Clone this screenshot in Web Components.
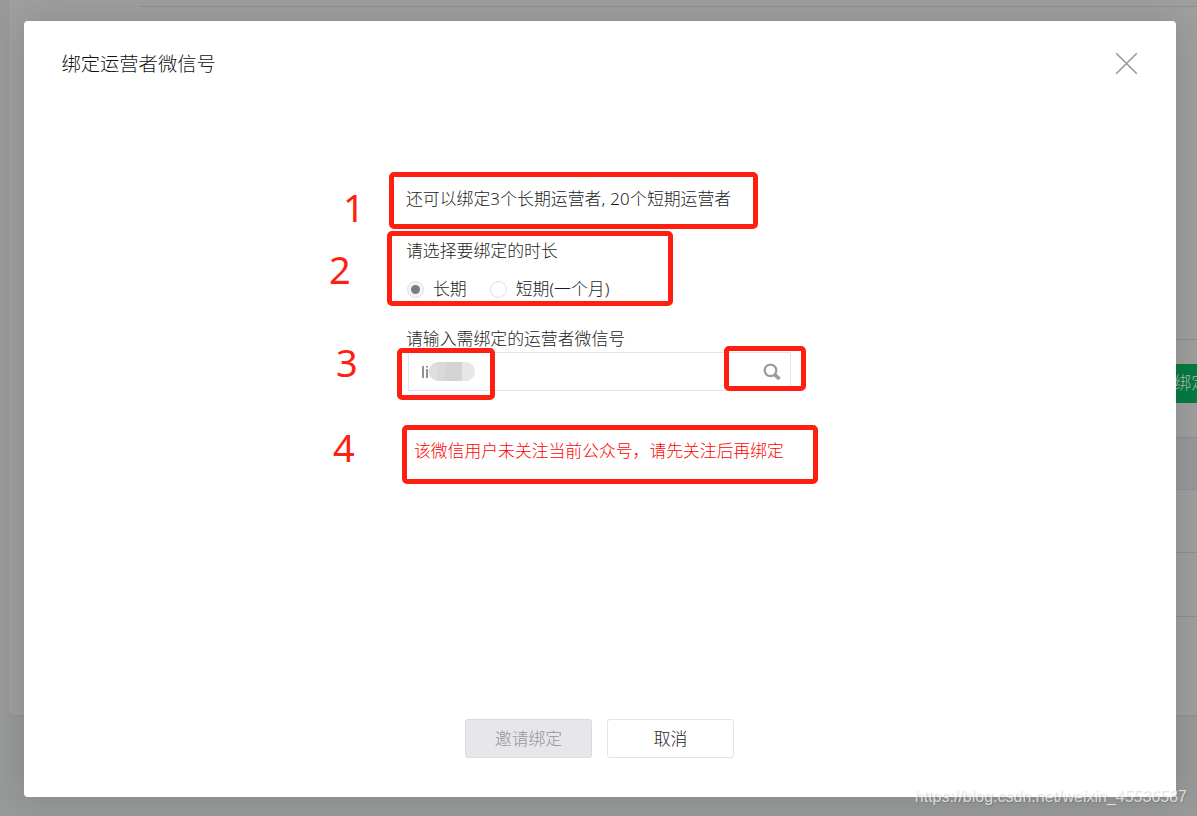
<!DOCTYPE html>
<html lang="zh-CN">
<head>
<meta charset="utf-8">
<title>绑定运营者微信号</title>
<style>
    html,body{
        margin: 0;
        height: 100%;
        overflow: hidden;
    }
    body{
        font-family: "Noto Sans","Noto Sans CJK SC",sans-serif;
        font-weight: 300;
        font-size: 16.86px;
        color: #1c1c1c;
    }
</style>
</head>
<body>
<bind-page>
    <bind-dialog heading="绑定运营者微信号">
        <bind-form></bind-form>
        <bind-button slot="footer" disabled>邀请绑定</bind-button>
        <bind-button slot="footer">取消</bind-button>
    </bind-dialog>
    <step-mark slot="marks" style="--x:389px;--y:172px;--w:369px;--h:57px;--nx:-46px;--ny:10px">1</step-mark>
    <step-mark slot="marks" style="--x:387px;--y:231px;--w:286px;--h:75px;--nx:-58px;--ny:13px">2</step-mark>
    <step-mark slot="marks" style="--x:397px;--y:348px;--w:98px;--h:52px;--nx:-61px;--ny:-11px">3</step-mark>
    <step-mark slot="marks" style="--x:724px;--y:346px;--w:82px;--h:45px"></step-mark>
    <step-mark slot="marks" style="--x:402px;--y:425px;--w:416px;--h:59px;--nx:-69px;--ny:-3px">4</step-mark>
    <water-mark slot="marks">https://blog.csdn.net/weixin_45536587</water-mark>
</bind-page>

<script>
class BindPage extends HTMLElement{
    constructor(){
        super()
        this.attachShadow({mode : 'open'})
    }
    getStyles(){
        return `
            <style>
                :host{
                    display: block;
                    position: relative;
                    height: 816px;
                    overflow: hidden;
                    background: #979a98;
                }
                .panel{
                    display: flex;
                    flex-direction: column;
                    box-sizing: border-box;
                    height: 715px;
                    margin-left: 9px;
                    background: #9f9f9f;
                    border-bottom-left-radius: 4px;
                    box-shadow: 0 1px 2px rgba(0,0,0,.06);
                }
                .tabs{
                    height: 6px;
                    margin-left: 131px;
                    border-bottom: 1px solid #8f8f90;
                }
                .table{
                    display: flex;
                    flex-direction: column;
                    margin: 332px 0 0 131px;
                    border-top: 1px solid #909091;
                }
                .action{
                    height: 97px;
                    display: flex;
                    align-items: flex-start;
                    justify-content: flex-end;
                }
                .green{
                    display: flex;
                    justify-content: flex-end;
                    margin-top: 24px;
                    width: 60px;
                    height: 39px;
                    line-height: 38px;
                    background: #067b40;
                    color: #b4bdb8;
                    white-space: nowrap;
                    overflow: hidden;
                }
                .green span{
                    margin-right: -11px;
                }
                .row{
                    height: 63px;
                    border-bottom: 1px solid #909091;
                }
                .head{
                    height: 51px;
                    background: #97989a;
                    border-top: 1px solid #909091;
                }
                .row.first{
                    height: 62px;
                }
                .mask{
                    position: absolute;
                    inset: 0;
                    padding: 21px 21px 19px 24px;
                    display: flex;
                }
                ::slotted(bind-dialog){
                    flex: 1;
                }
            </style>
        `
    }
    render(){
        this.shadowRoot.innerHTML = `
            ${this.getStyles()}
            <div class="panel">
                <div class="tabs"></div>
                <div class="table">
                    <div class="action"><div class="green"><span>绑定</span></div></div>
                    <div class="row head"></div>
                    <div class="row first"></div>
                    <div class="row"></div>
                </div>
            </div>
            <div class="mask"><slot></slot></div>
            <slot name="marks"></slot>
        `
    }
    connectedCallback(){
        this.render()
    }
}

class BindDialog extends HTMLElement{
    constructor(){
        super()
        this.attachShadow({mode : 'open'})
    }
    getStyles(){
        return `
            <style>
                :host{
                    display: flex;
                    flex-direction: column;
                    background: #fff;
                    border-radius: 4px;
                    box-shadow: 0 0 36px rgba(0,0,0,.14);
                }
                header{
                    display: flex;
                    align-items: center;
                    justify-content: space-between;
                    height: 85px;
                    padding: 0 38px 0 37.5px;
                }
                h3{
                    margin: -1px 0 0;
                    font-size: 19.3px;
                    font-weight: inherit;
                    color: #111;
                }
                svg{
                    display: block;
                }
                main{
                    flex: 1;
                    padding: 78px 0 0 382px;
                }
                footer{
                    display: flex;
                    gap: 15px;
                    padding: 0 0 39px 441px;
                }
            </style>
        `
    }
    render(){
        this.shadowRoot.innerHTML = `
            ${this.getStyles()}
            <header>
                <h3>${this.getAttribute('heading')}</h3>
                <svg width="23" height="23" viewBox="0 0 23 23"><path d="M1.2 1.2L21.8 21.8M21.8 1.2L1.2 21.8" stroke="#999" stroke-width="1.6" fill="none"/></svg>
            </header>
            <main><slot></slot></main>
            <footer><slot name="footer"></slot></footer>
        `
    }
    connectedCallback(){
        this.render()
    }
}

class BindForm extends HTMLElement{
    constructor(){
        super()
        this.attachShadow({mode : 'open'})
    }
    getStyles(){
        return `
            <style>
                :host{
                    display: block;
                    line-height: 30px;
                }
                p{
                    margin: 0;
                    white-space: nowrap;
                }
                .quota{
                    margin-bottom: 22px;
                }
                .quota i{
                    font-style: normal;
                    letter-spacing: .3px;
                }
                .radios{
                    display: flex;
                    gap: 22px;
                    margin: 8px 0 20px;
                }
                .name{
                    line-height: 30px;
                    margin-bottom: -2px;
                }
                .error{
                    margin: 45px 0 0 8px;
                    font-size: 16.82px;
                    color: #f00;
                }
            </style>
        `
    }
    render(){
        this.shadowRoot.innerHTML = `
            ${this.getStyles()}
            <p class="quota">还可以绑定<i>3</i>个长期运营者<i>, 20</i>个短期运营者</p>
            <p>请选择要绑定的时长</p>
            <div class="radios">
                <radio-item checked>长期</radio-item>
                <radio-item>短期(一个月)</radio-item>
            </div>
            <p class="name">请输入需绑定的运营者微信号</p>
            <search-input>li</search-input>
            <p class="error">该微信用户未关注当前公众号，请先关注后再绑定</p>
        `
    }
    connectedCallback(){
        this.render()
    }
}

class RadioItem extends HTMLElement{
    constructor(){
        super()
        this.attachShadow({mode : 'open'})
    }
    render(){
        this.shadowRoot.innerHTML = `
            <style>
                :host{
                    display: flex;
                    align-items: center;
                    gap: 9px;
                    padding-left: 1px;
                    white-space: nowrap;
                }
                .dot{
                    display: grid;
                    place-items: center;
                    box-sizing: border-box;
                    width: 17px;
                    height: 17px;
                    border: 1.5px solid #dfdfe3;
                    border-radius: 50%;
                }
                :host([checked]) .dot{
                    background: #f4f4f4;
                }
                :host([checked]) .dot::after{
                    content: "";
                    width: 9px;
                    height: 9px;
                    border-radius: 50%;
                    background: #7c7c7c;
                }
            </style>
            <span class="dot"></span><slot></slot>
        `
    }
    connectedCallback(){
        this.render()
    }
}

class SearchInput extends HTMLElement{
    constructor(){
        super()
        this.attachShadow({mode : 'open'})
    }
    render(){
        this.shadowRoot.innerHTML = `
            <style>
                :host{
                    display: flex;
                    align-items: center;
                    box-sizing: border-box;
                    width: 383px;
                    height: 39px;
                    margin-left: 2px;
                    padding: 0 9px 0 12px;
                    border: 1px solid #e4e4e8;
                }
                .hidden{
                    width: 46px;
                    height: 19px;
                    border-radius: 9px;
                    background: linear-gradient(90deg,#dedede 0 8px,#d9d9d9 8px 16px,#d4d4d4 16px 33px,#e7e7e7 33px);
                }
                svg{
                    margin-left: auto;
                }
            </style>
            <slot></slot><span class="hidden"></span>
            <svg width="18" height="18" viewBox="0 0 18 18" fill="none" stroke="#9b9b9b">
                <circle cx="7.5" cy="7.4" r="5.8" stroke-width="2.3"/>
                <path d="M11.7 11.6L16.6 16" stroke-width="3.6"/>
            </svg>
        `
    }
    connectedCallback(){
        this.render()
    }
}

class BindButton extends HTMLElement{
    constructor(){
        super()
        this.attachShadow({mode : 'open'})
    }
    render(){
        this.shadowRoot.innerHTML = `
            <style>
                :host{
                    display: block;
                    box-sizing: border-box;
                    width: 127px;
                    height: 39px;
                    line-height: 38px;
                    border: 1px solid #e4e4e8;
                    border-radius: 3px;
                    text-align: center;
                    background: #fff;
                }
                :host([disabled]){
                    background: #e6e6eb;
                    border-color: #dadadf;
                    color: #969696;
                }
            </style>
            <slot></slot>
        `
    }
    connectedCallback(){
        this.render()
    }
}

// red frame with its step number, placed over the dialog
class StepMark extends HTMLElement{
    constructor(){
        super()
        this.attachShadow({mode : 'open'})
    }
    render(){
        this.shadowRoot.innerHTML = `
            <style>
                :host{
                    position: absolute;
                    left: var(--x);
                    top: var(--y);
                    width: var(--w);
                    height: var(--h);
                    box-sizing: border-box;
                    border: 5px solid #ff1f10;
                    border-radius: 5px;
                }
                span{
                    position: absolute;
                    left: calc(var(--nx) - 5px);
                    top: calc(var(--ny) - 5px);
                    font-size: 38px;
                    line-height: 50px;
                    font-weight: 400;
                    color: #ff1f10;
                }
            </style>
            <span><slot></slot></span>
        `
    }
    connectedCallback(){
        this.render()
    }
}

class WaterMark extends HTMLElement{
    constructor(){
        super()
        this.attachShadow({mode : 'open'})
    }
    render(){
        this.shadowRoot.innerHTML = `
            <style>
                :host{
                    position: absolute;
                    right: 10px;
                    bottom: 9px;
                    font: 400 16px/20px "Liberation Sans",sans-serif;
                    color: rgba(255,255,255,.7);
                    text-shadow: 1px 1px 1px rgba(0,0,0,.16);
                }
            </style>
            <slot></slot>
        `
    }
    connectedCallback(){
        this.render()
    }
}

customElements.define('bind-page', BindPage)
customElements.define('bind-dialog', BindDialog)
customElements.define('bind-form', BindForm)
customElements.define('radio-item', RadioItem)
customElements.define('search-input', SearchInput)
customElements.define('bind-button', BindButton)
customElements.define('step-mark', StepMark)
customElements.define('water-mark', WaterMark)
</script>
</body>
</html>
